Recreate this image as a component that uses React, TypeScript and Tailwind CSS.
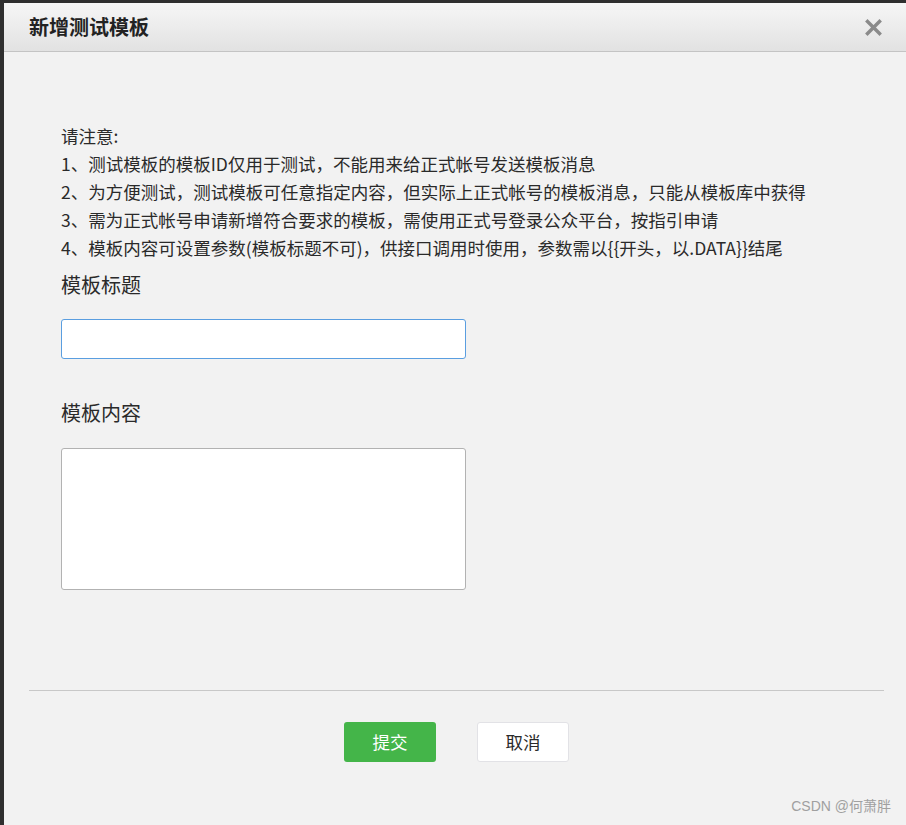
import { useState } from 'react';

const notes = [
  '1、测试模板的模板ID仅用于测试，不能用来给正式帐号发送模板消息',
  '2、为方便测试，测试模板可任意指定内容，但实际上正式帐号的模板消息，只能从模板库中获得',
  '3、需为正式帐号申请新增符合要求的模板，需使用正式号登录公众平台，按指引申请',
  '4、模板内容可设置参数(模板标题不可)，供接口调用时使用，参数需以{{开头，以.DATA}}结尾',
];

export default function App() {
  const [title, setTitle] = useState('');
  const [content, setContent] = useState('');

  return (
    <div
      className="relative w-[906px] h-[825px] overflow-hidden bg-[#2f2f2f] pl-[4px] pt-[3px]"
      style={{ fontFamily: '"Noto Sans CJK SC", "Noto Sans", "Liberation Sans", sans-serif' }}
    >
      <div className="flex flex-col w-[906px] h-[822px] bg-[#f2f2f2] rounded-tl-[2px]">
        {/* header */}
        <div className="flex items-center justify-between h-[49px] shrink-0 border-b border-[#c4c4c4] bg-gradient-to-b from-[#f6f6f6] to-[#e2e2e2] pl-[25px] pr-[27px]">
          <h3 className="text-[20px] font-bold text-[#222] leading-none">新增测试模板</h3>
          <button className="w-[20px] h-[20px] flex items-center justify-center text-[#8a8a8a]">
            <svg width="17" height="17" viewBox="0 0 17 17">
              <path d="M2.5 2.5 L14.5 14.5 M14.5 2.5 L2.5 14.5" stroke="currentColor" strokeWidth="3.4" strokeLinecap="square" />
            </svg>
          </button>
        </div>

        {/* body */}
        <div className="pl-[57px] pt-[70px]">
          <div className="text-[17.5px] leading-[28px] text-[#2a2a2a]">
            <p>请注意:</p>
            {notes.map((n) => (
              <p key={n}>{n}</p>
            ))}
          </div>

          <label className="block mt-[9px] text-[20px] leading-[28px] text-[#2a2a2a]">模板标题</label>
          <input
            value={title}
            onChange={(e) => setTitle(e.target.value)}
            className="block mt-[20px] w-[405px] h-[40px] rounded-[3px] border border-[#5a9ee0] bg-white px-2 outline-none"
          />

          <label className="block mt-[40px] text-[20px] leading-[28px] text-[#2a2a2a]">模板内容</label>
          <textarea
            value={content}
            onChange={(e) => setContent(e.target.value)}
            className="block mt-[21px] w-[405px] h-[142px] rounded-[3px] border border-[#b2b2b2] bg-white p-2 outline-none resize-none"
          />
        </div>

        <div className="mt-[100px] ml-[25px] w-[855px] border-t border-[#c8c8c8]" />

        <div className="flex justify-center gap-[41px] mt-[31px] pr-[1px]">
          <button className="w-[92px] h-[40px] rounded-[3px] bg-[#44b549] text-white text-[17.5px]">提交</button>
          <button className="w-[92px] h-[40px] rounded-[3px] bg-white border border-[#e2e2e6] text-[#2a2a2a] text-[17.5px]">取消</button>
        </div>
      </div>

      <div
        className="absolute right-[15px] bottom-[8px] text-[14px] text-[#a0a0a0]"
        style={{ fontFamily: '"Liberation Sans", "Noto Sans CJK SC", sans-serif' }}
      >
        CSDN @何萧胖
      </div>
    </div>
  );
}
